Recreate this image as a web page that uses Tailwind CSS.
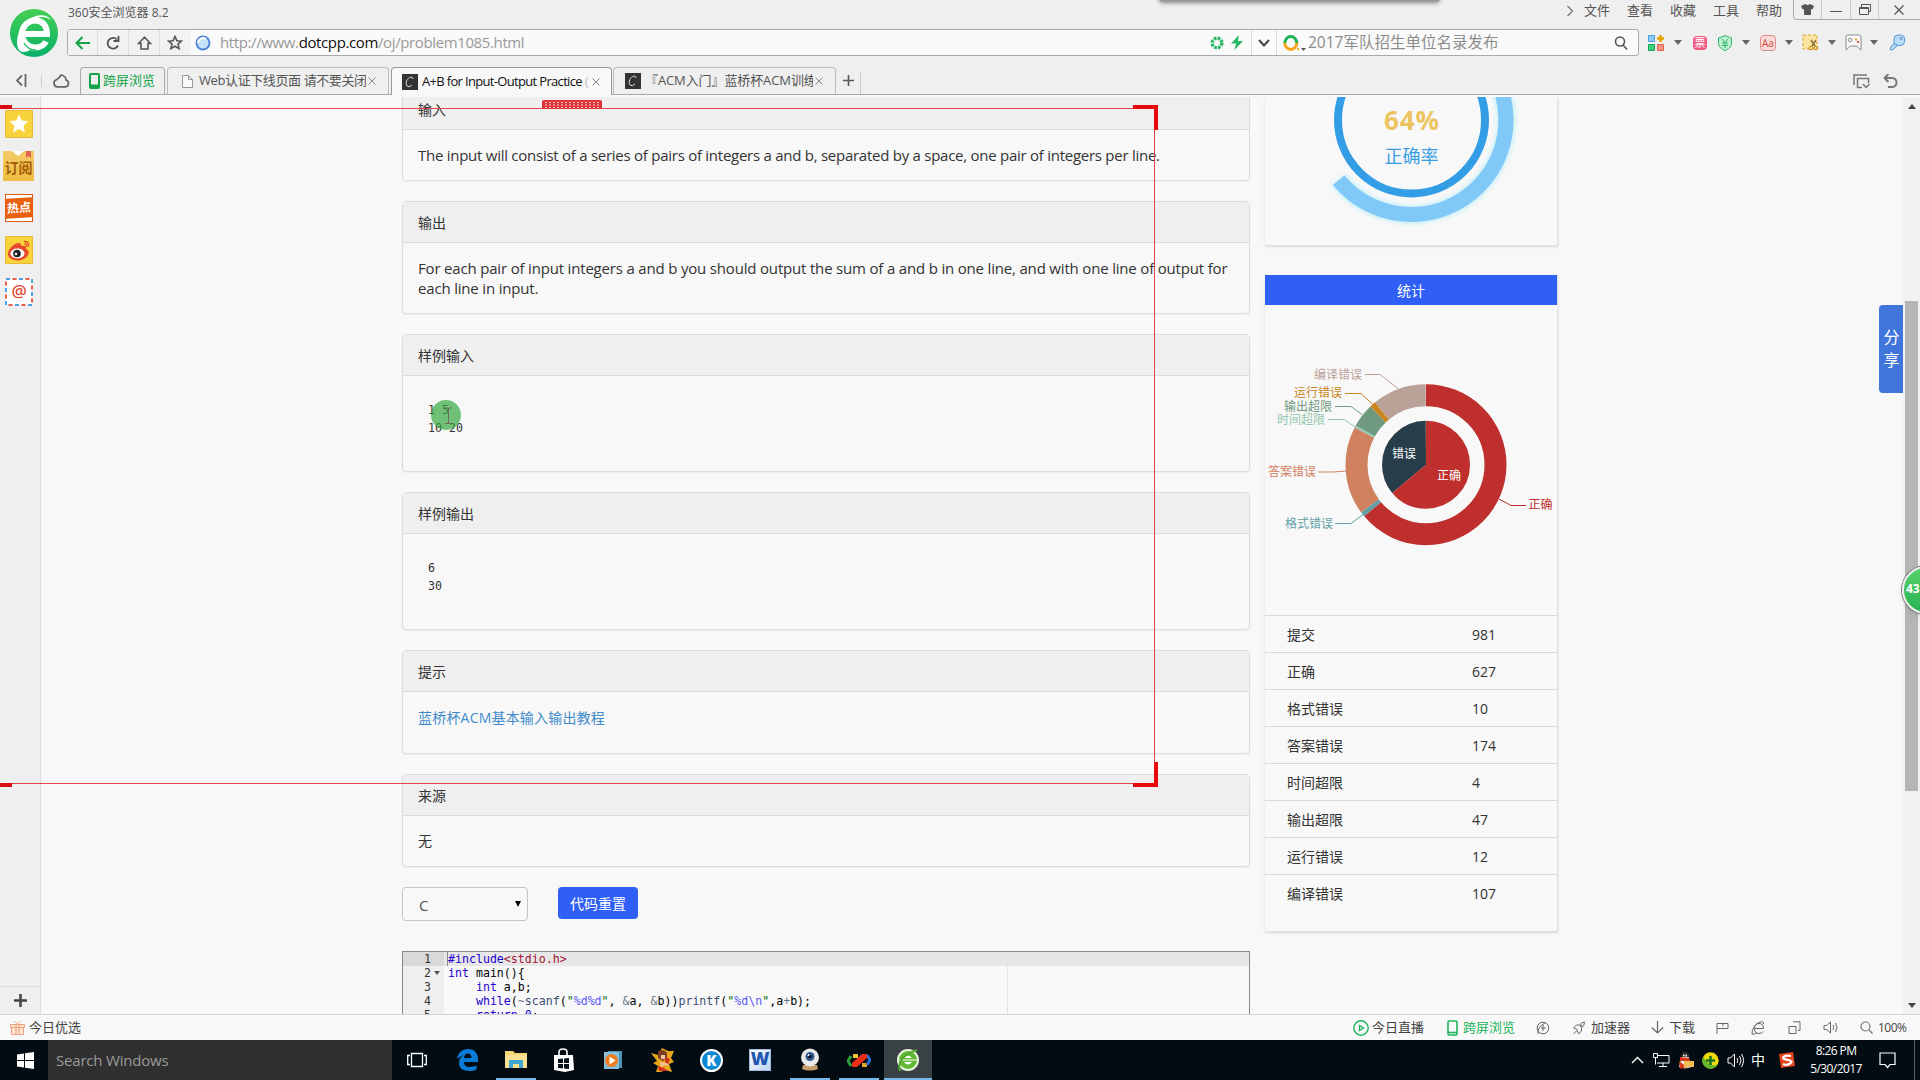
<!DOCTYPE html>
<html lang="zh-CN">
<head>
  <meta charset="UTF-8">
  <meta name="viewport" content="width=device-width, initial-scale=1.0">
  <title>A+B for Input-Output Practice</title>
  <script src="https://cdn.jsdelivr.net/npm/@tailwindcss/browser@4"></script>
  <style>
    body {
      font-family: 'Open Sans', 'Noto Sans CJK SC', sans-serif;
    }
    .mono {
      font-family: 'DejaVu Sans Mono', monospace;
    }
    svg {
      flex-shrink: 0;
    }
  </style>
</head>
<body class="relative w-[1920px] h-[1080px] overflow-hidden bg-[#f8f8f8] text-[#333]">

  <!-- 浏览器顶部 -->
  <header class="h-[97px] bg-[#efefef] flex flex-col">
    <div class="flex h-[66px]">
      <div class="w-[67px] pl-2.5 pt-[9px]">
        <svg width="48" height="48" viewBox="0 0 48 48">
          <defs><linearGradient id="lg" x1="0" y1="0" x2="0" y2="1"><stop offset="0" stop-color="#45cf52"/><stop offset="1" stop-color="#08b069"/></linearGradient></defs>
          <circle cx="24" cy="24" r="24" fill="url(#lg)"/>
          <path d="M14 25h23c0-9-5-13.500-12-13.500s-13 6-13 13.500 6 13.500 13 13.500c5 0 9-2 11-6" fill="none" stroke="#fff" stroke-width="6"/>
          <path d="M41 11C35 1 13 7 8 26c-2 8-1 17 5 17 4 0 8-2 11-5-5 2-9 1-11-3-4-9 3-22 14-26 5-2 9-1 14 2z" fill="#fff"/>
          <path d="M14 34q4 7 12 7" fill="none" stroke="#1fbd60" stroke-width="1.500"/>
        </svg>
      </div>
      <div class="flex-1">
        <div class="flex h-[29px] items-start justify-between">
          <div class="pt-[3px] pl-px text-[12px] leading-5 text-[#555]">360安全浏览器 8.2</div>
          <div class="flex">
            <div class="flex h-[22px] items-center text-[13px] text-[#555]">
              <svg class="mr-2.5" width="8" height="12" viewBox="0 0 8 12" fill="none" stroke="#777" stroke-width="1.3"><path d="M1.500 1l5 5-5 5"/></svg>
              <span class="w-[43px]">文件</span><span class="w-[43px]">查看</span><span class="w-[43px]">收藏</span><span class="w-[43px]">工具</span><span class="w-[37px]">帮助</span>
            </div>
            <div class="flex h-5 w-[127px] rounded-bl border-b border-l border-[#aaa]">
              <div class="flex w-7 items-center justify-center border-r border-[#ccc]"><svg width="13" height="11" viewBox="0 0 13 11" fill="#555"><path d="M4 0q2.500 2 5 0l4 2-1.500 3.500L10 5v6H3V5l-1.500.5L0 2z"/></svg></div>
              <div class="flex w-[29px] items-center justify-center border-r border-[#ccc]"><span class="mt-1 h-px w-3 bg-[#555]"></span></div>
              <div class="flex w-7 items-center justify-center border-r border-[#ccc]"><svg width="12" height="11" viewBox="0 0 12 11" fill="none" stroke="#555"><path d="M.5 3.500h9v7h-9zM.5 4.500h9M2.500 3V.5h9v7h-2"/></svg></div>
              <div class="flex flex-1 items-center justify-center pr-px"><svg width="10" height="10" viewBox="0 0 10 10" stroke="#555" stroke-width="1.200"><path d="M.5.5l9 9M9.500.5l-9 9"/></svg></div>
            </div>
          </div>
        </div>
        <div class="flex items-center">
          <!-- 地址栏 -->
          <div class="flex h-[27px] w-[1572px] rounded-[3px] border border-[#aaa] bg-[#fafafa]">
            <div class="flex w-[30px] items-center justify-center border-r border-[#ddd] bg-[#f2f2f2]"><svg width="15" height="14" viewBox="0 0 15 14" fill="none" stroke="#12a348" stroke-width="2"><path d="M7.500 1L1.500 7l6 6M2 7h13"/></svg></div>
            <div class="flex w-[31px] items-center justify-center border-r border-[#ddd] bg-[#f2f2f2]"><svg width="14" height="14" viewBox="0 0 14 14" fill="none" stroke="#555" stroke-width="1.800"><path d="M12 9.500A5.400 5.400 0 1 1 11 3.500"/><path d="M12.500 0v5H7.500"/></svg></div>
            <div class="flex w-[31px] items-center justify-center border-r border-[#ddd] bg-[#f2f2f2]"><svg width="15" height="14" viewBox="0 0 15 14" fill="none" stroke="#555" stroke-width="1.600"><path d="M7.500 1.200L1.500 7.500H4V13h7V7.500h2.500z"/></svg></div>
            <div class="flex w-[31px] items-center justify-center bg-[#f2f2f2] pr-px"><svg width="16" height="15" viewBox="0 0 16 15" fill="none" stroke="#555" stroke-width="1.600"><path d="M8 1.500l1.900 4.200 4.600.4-3.500 3 1.100 4.500L8 11.200l-4.100 2.400L5 9.100l-3.500-3 4.600-.4z"/></svg></div>
            <div class="flex w-[29px] items-center pl-1"><svg width="16" height="16" viewBox="0 0 16 16"><circle cx="8" cy="8" r="6.500" fill="#c5e2fa" stroke="#4b86d6" stroke-width="2"/><path d="M3 8a5 5 0 0 1 8-4" stroke="#fff" stroke-width="2" fill="none"/></svg></div>
            <div class="flex-1 text-[15px] leading-[25px] tracking-[-0.38px] text-[#999]">http://www.<span class="text-[#111]">dotcpp.com</span>/oj/problem1085.html</div>
            <div class="flex items-center gap-[7px] pr-2">
              <svg width="14" height="14" viewBox="0 0 14 14" fill="none"><circle cx="7" cy="7" r="4.800" stroke="#2bb866" stroke-width="3.500" stroke-dasharray="2.700 1.070"/></svg>
              <svg width="12" height="15" viewBox="0 0 12 15" fill="#2bb866"><path d="M8 0L0 8.500h5L3.500 15 12 6H7z"/></svg>
            </div>
            <div class="flex w-[26px] items-center justify-center border-x border-[#ddd]"><svg width="12" height="8" viewBox="0 0 12 8" fill="none" stroke="#444" stroke-width="2"><path d="M1 1l5 5.500L11 1"/></svg></div>
            <div class="flex w-[361px] items-center pl-1.5">
              <svg width="24" height="18" viewBox="0 0 24 18" fill="none"><path d="M1.800 9a6 6.500 0 0 1 12 0" stroke="#1fb356" stroke-width="3"/><path d="M1.800 9a6 6.500 0 0 0 12 0" stroke="#f6a316" stroke-width="3"/><path d="M14 14h2v2h-2z" fill="#f6a316"/><path d="M18 14h5l-2.500 3z" fill="#555"/></svg>
              <span class="ml-px flex-1 text-[15.500px] leading-[25px] text-[#8c8c8c]">2017军队招生单位名录发布</span>
              <svg class="mr-2.5" width="14" height="14" viewBox="0 0 14 14" fill="none" stroke="#555" stroke-width="1.600"><circle cx="6" cy="5.500" r="4.500"/><path d="M9 9l4 4.500"/></svg>
            </div>
          </div>
          <!-- 扩展图标 -->
          <div class="flex flex-1 items-center pl-[9px]">
            <svg width="16" height="16" viewBox="0 0 16 16"><path d="M.5.5h6v6h-6z" fill="#8cc9f4" stroke="#4a9de0"/><path d="M.5 9.500h6v6h-6z" fill="#3fd17d" stroke="#10a550"/><path d="M9.500 9.500h6v6h-6z" fill="#f79384" stroke="#e5604d"/><path d="M12.500 0v7M9 3.500h7" stroke="#e8a400" stroke-width="2.500"/></svg>
            <svg class="ml-2.5 mr-[11px]" width="8" height="5" viewBox="0 0 8 5" fill="#666"><path d="M0 0h8L4 5z"/></svg>
            <span class="h-3.5 w-3.5 rounded-sm bg-[#ef5a83] text-center text-[11px] leading-[14px] text-white">票</span>
            <svg class="ml-2.5" width="16" height="16" viewBox="0 0 16 16" fill="#c0f0d2" stroke="#2fb56b"><path d="M8 .7l6.500 2.300v5c0 4-3.500 6.500-6.500 7.500C5 14.500 1.500 12 1.500 8V3z"/><path d="M5 4l3 3.500L11 4M8 7.500V13M5 8h6M5 10.500h6" fill="none"/></svg>
            <svg class="ml-[9px] mr-2.5" width="8" height="5" viewBox="0 0 8 5" fill="#666"><path d="M0 0h8L4 5z"/></svg>
            <span class="h-4 w-4 rounded-sm border border-[#dc8b86] bg-[#fbdcd9] text-center text-[10px] leading-[14px] text-[#d14b43]">Aa</span>
            <svg class="ml-[9px] mr-[9px]" width="8" height="5" viewBox="0 0 8 5" fill="#666"><path d="M0 0h8L4 5z"/></svg>
            <svg width="17" height="17" viewBox="0 0 17 17" fill="none"><path d="M1 1h14v14H1z" fill="#fbe3a0" stroke="#e0a528" stroke-dasharray="3 2"/><path d="M9 6l4 6M14 6l-4 6" stroke="#8a6a3a" stroke-width="1.500"/><circle cx="9" cy="14" r="1.800" stroke="#c88612"/><circle cx="14" cy="14" r="1.800" stroke="#c88612"/></svg>
            <svg class="ml-[9px] mr-[9px]" width="8" height="5" viewBox="0 0 8 5" fill="#666"><path d="M0 0h8L4 5z"/></svg>
            <svg width="17" height="17" viewBox="0 0 17 17" fill="#fafafa" stroke="#8b8b8b"><path d="M2.500 1h12q1.500 0 1.500 2v13l-4.500-4h-6L1 16V3q0-2 1.500-2z"/><circle cx="5" cy="6" r="1.800"/><path d="M10 4.500h2v2h-2z" fill="#e9a21d" stroke="none"/><path d="M12 7h2v2h-2z" fill="#dd5141" stroke="none"/></svg>
            <svg class="ml-[8px] mr-[11px]" width="8" height="5" viewBox="0 0 8 5" fill="#666"><path d="M0 0h8L4 5z"/></svg>
            <svg width="17" height="17" viewBox="0 0 17 17" fill="#b6dcf7" stroke="#5b93c9"><path d="M5 9l-4 5.500q0 2 2 1.500L8 12z"/><rect x="5" y="1" width="10.500" height="10.500" rx="4"/><circle cx="12" cy="4.500" r="1"/></svg>
          </div>
        </div>
      </div>
    </div>
    <!-- 标签栏 -->
    <div class="flex h-[29px] items-end border-b border-[#aaa] pl-[15px]">
      <div class="flex h-[27px] w-[65px] items-center">
        <svg width="12" height="13" viewBox="0 0 12 13" fill="none" stroke="#666" stroke-width="1.800"><path d="M7 1.500l-5 5 5 5M10.500 0v13"/></svg>
        <span class="ml-3.5 h-3 w-px bg-[#ccc]"></span>
        <svg class="ml-[11px]" width="17" height="14" viewBox="0 0 17 14" fill="none" stroke="#666" stroke-width="1.700"><path d="M5 12.800a3.600 3.600 0 0 1-1.500-7Q6.500 4 8 1q5 1 5 5a3.500 3.500 0 0 1-.5 6.800z"/></svg>
      </div>
      <div class="flex h-[27px] w-[85px] items-center rounded-t border border-b-0 border-[#aaa] pl-2 text-[13px] text-[#12a348]"><svg class="mr-[3px]" width="11" height="16" viewBox="0 0 11 16" fill="none"><rect x="1" y="1" width="9" height="14" rx="1" stroke="#12a348" stroke-width="2"/><path d="M1 13h9" stroke="#12a348" stroke-width="3"/></svg>跨屏浏览</div>
      <div class="ml-0.5 flex h-[27px] w-[222px] items-center overflow-hidden rounded-t border border-b-0 border-[#bbb] pl-3.5 text-[13px] text-[#555]">
        <svg width="11" height="13" viewBox="0 0 11 13" fill="#fafafa" stroke="#999"><path d="M.5.5h6l4 4v8H.5zM6.500.5v4h4"/></svg>
        <span class="ml-1.5 mr-0.5 w-[167px] overflow-hidden whitespace-nowrap tracking-[-0.4px]">Web认证下线页面 请不要关闭</span>
        <svg width="8" height="8" viewBox="0 0 8 8" stroke="#888"><path d="M.5.5l7 7M7.500.5l-7 7"/></svg>
      </div>
      <div class="-mb-px ml-0.5 flex h-7 w-[221px] items-center overflow-hidden rounded-t border border-b-0 border-[#999] bg-[#f8f8f8] pl-2.5 text-[13px] text-[#111]">
        <svg width="16" height="16" viewBox="0 0 16 16"><path d="M0 0h16v16H0z" fill="#333"/><path d="M11 5q0-2-2-2C5 4 3 9 5 12q2 2 5-1" fill="none" stroke="#ddd"/></svg>
        <span class="ml-1 w-[170px] overflow-hidden whitespace-nowrap tracking-[-0.67px]">A+B for Input-Output Practice <span class="text-[#bbb]">(</span></span>
        <svg width="8" height="8" viewBox="0 0 8 8" stroke="#888"><path d="M.5.5l7 7M7.500.5l-7 7"/></svg>
      </div>
      <div class="ml-px flex h-[27px] w-[223px] items-center overflow-hidden rounded-t border border-b-0 border-[#bbb] pl-[11px] text-[13px] text-[#555]">
        <svg width="16" height="16" viewBox="0 0 16 16"><path d="M0 0h16v16H0z" fill="#333"/><path d="M11 5q0-2-2-2C5 4 3 9 5 12q2 2 5-1" fill="none" stroke="#ddd"/></svg>
        <span class="ml-1 mr-0.5 w-[168px] overflow-hidden whitespace-nowrap tracking-[-0.1px]">『ACM入门』蓝桥杯ACM训练</span>
        <svg width="8" height="8" viewBox="0 0 8 8" stroke="#888"><path d="M.5.5l7 7M7.500.5l-7 7"/></svg>
      </div>
      <div class="flex h-[23px] w-[25px] items-center justify-center border-r border-[#ccc] pb-1"><svg width="11" height="11" viewBox="0 0 11 11" stroke="#555" stroke-width="1.600"><path d="M5.500 0v11M0 5.500h11"/></svg></div>
      <div class="flex flex-1 items-center justify-end gap-[13px] pb-[5px] pr-[22px]">
        <svg width="17" height="15" viewBox="0 0 17 15" fill="none" stroke="#777" stroke-width="1.500"><path d="M1 11V1h13M9 13.500H4.500V4.500h11V9M10 10l3 3.500 3.500-3.500"/></svg>
        <svg width="15" height="15" viewBox="0 0 15 15" fill="none" stroke="#777" stroke-width="2"><path d="M2 4h7a4.500 4.500 0 0 1 0 9H5"/><path d="M5.500 0L1.500 4l4 4"/></svg>
      </div>
    </div>
    <div class="h-0.5 bg-[#f8f8f8]"></div>
  </header>

  <main class="flex h-[917px] overflow-hidden">
    <!-- 侧边栏 -->
    <aside class="flex w-[41px] flex-col items-start border-r border-[#ddd] bg-[#efefef] pl-[5px] pt-[13px]">
      <svg width="28" height="28" viewBox="0 0 28 28"><path d="M.5.5h27v27H.5z" fill="#f9d33c" stroke="#e6b93a"/><path d="M14 4.500l2.800 6 6.700.7-5 4.500 1.500 6.800-6-3.600-6 3.600 1.500-6.800-5-4.500 6.700-.7z" fill="#fff"/></svg>
      <div class="relative -ml-0.5 mt-[13px] h-[30px] w-[31px] bg-[#f0c14c] bg-linear-to-b from-[#f3cb67] to-[#eebc42] pt-[8px] text-center text-[14px] font-bold leading-[18px] text-[#a65c05]">
        <svg class="absolute inset-0" width="31" height="10" viewBox="0 0 31 10"><path d="M9 0h12l-6 5z" fill="#fff"/><path d="M23 0h5v7l-2.500-2L23 7z" fill="#e2604f"/></svg>
        <span class="relative">订阅</span>
      </div>
      <div class="mt-[13px] h-7 w-7 border border-[#e2590f] bg-white py-[3px]"><div class="h-5 -skew-y-3 bg-[#e9600f] text-center text-[12px] font-bold leading-5 text-white">热点</div></div>
      <svg class="mt-3.5" width="28" height="28" viewBox="0 0 28 28"><path d="M.5.5h27v27H.5z" fill="#f9d33c" stroke="#e6b93a"/><path d="M3 18c0-5 6-11 11-11 2 0 2 2 2 3 3-1 6 0 5 3 3 1 3 4 2 6-2 4-7 5.500-11 5.500-5 0-9-3-9-6.500z" fill="#e8492c"/><ellipse cx="12.500" cy="17.500" rx="7" ry="5" fill="#fff"/><circle cx="12" cy="17.500" r="3.800" fill="#222"/><circle cx="11" cy="18" r="1.200" fill="#fff"/><path d="M19 5.500q5-.5 4.500 5M19.500 8q2.500 0 2 2.500" fill="none" stroke="#e8492c" stroke-width="1.500"/></svg>
      <div class="relative mt-3.5 h-7 w-7 text-center text-[17px] font-semibold leading-[25px] text-[#df4c37]">
        <svg class="absolute inset-0" width="28" height="28" viewBox="0 0 28 28" fill="none" stroke-width="2"><path d="M1 1h26v26H1z" fill="#fff"/><rect x="1" y="1" width="26" height="26" stroke="#4d9fe0" stroke-dasharray="4 9"/><rect x="1" y="1" width="26" height="26" stroke="#e8604c" stroke-dasharray="4 9" stroke-dashoffset="-6.500"/></svg>
        <span class="relative">@</span>
      </div>
      <div class="-ml-[5px] mt-auto flex h-7 w-10 items-center justify-center border-t border-[#ddd]"><svg width="13" height="13" viewBox="0 0 13 13" stroke="#444" stroke-width="2.500"><path d="M6.500 0v13M0 6.500h13"/></svg></div>
    </aside>

    <!-- 题目内容 -->
    <section class="ml-[361px] w-[848px] text-[14px] leading-5">
      <div class="-mt-[9px] mb-5 h-[93px] rounded border border-[#dcdcdc] shadow-xs">
        <div class="h-[41px] border-b border-[#dcdcdc] bg-[#efefef] px-[15px] py-[11px]">输入</div>
        <p class="px-[15px] pt-[15px] text-[15px] tracking-[-0.26px]">The input will consist of a series of pairs of integers a and b, separated by a space, one pair of integers per line.</p>
      </div>
      <div class="mb-5 h-[113px] rounded border border-[#dcdcdc] shadow-xs">
        <div class="h-[41px] border-b border-[#dcdcdc] bg-[#efefef] px-[15px] py-[11px]">输出</div>
        <p class="whitespace-nowrap px-[15px] pt-[15px] text-[15px] tracking-[-0.18px]">For each pair of input integers a and b you should output the sum of a and b in one line, and with one line of output for<br>each line in input.</p>
      </div>
      <div class="mb-5 h-[138px] rounded border border-[#dcdcdc] shadow-xs">
        <div class="h-[41px] border-b border-[#dcdcdc] bg-[#efefef] px-[15px] py-[11px]">样例输入</div>
        <pre class="mono px-[25px] pt-[25px] text-[11.600px] leading-[18px]">1 5
10 20</pre>
      </div>
      <div class="mb-5 h-[138px] rounded border border-[#dcdcdc] shadow-xs">
        <div class="h-[41px] border-b border-[#dcdcdc] bg-[#efefef] px-[15px] py-[11px]">样例输出</div>
        <pre class="mono px-[25px] pt-[25px] text-[11.600px] leading-[18px]">6
30</pre>
      </div>
      <div class="mb-5 h-[104px] rounded border border-[#dcdcdc] shadow-xs">
        <div class="h-[41px] border-b border-[#dcdcdc] bg-[#efefef] px-[15px] py-[11px]">提示</div>
        <p class="px-[15px] pt-4 tracking-[0.2px]"><a class="text-[#428bca]">蓝桥杯ACM基本输入输出教程</a></p>
      </div>
      <div class="h-[93px] rounded border border-[#dcdcdc] shadow-xs">
        <div class="h-[41px] border-b border-[#dcdcdc] bg-[#efefef] px-[15px] py-[11px]">来源</div>
        <p class="px-[15px] pt-[15px]">无</p>
      </div>
      <div class="mt-5 flex items-start">
        <div class="flex h-[34px] w-[126px] items-center justify-between rounded border border-[#c4c4c4] pl-4 pr-1.5 text-[15px] text-[#555]"><span class="pt-0.5">C</span><svg width="6" height="6" viewBox="0 0 6 6"><path d="M0 0h6L3 6z"/></svg></div>
        <button class="ml-[30px] h-8 w-20 rounded bg-[#2f5ff5] pt-px text-[14px] text-white">代码重置</button>
      </div>
      <!-- 代码编辑器 -->
      <div class="mono mt-[30px] flex h-[72px] border border-b-0 border-[#888] text-[11.600px] leading-[14px] text-black">
        <div class="w-[41px] bg-[#efefef] text-[#333]">
          <div class="h-3.5 bg-[#d9d9d9] pr-[13px] text-right">1</div>
          <div class="flex h-3.5 items-center justify-end pr-1">2<svg class="ml-[3px]" width="6" height="4" viewBox="0 0 6 4" fill="#555"><path d="M0 0h6L3 4z"/></svg></div>
          <div class="pr-[13px] text-right">3</div>
          <div class="pr-[13px] text-right">4</div>
          <div class="pr-[13px] text-right">5</div>
        </div>
        <div class="w-[564px] border-r border-[#e4e4e4]">
          <div class="h-3.5 whitespace-pre bg-[#e7e7e7] pl-[3px]"><span class="border-l border-[#888]"></span><span class="text-[#1c00cf]">#include</span><span class="text-[#a31535]">&lt;stdio.h&gt;</span></div>
          <div class="h-3.5 whitespace-pre pl-1"><span class="text-[#1c00cf]">int</span> main(){</div>
          <div class="h-3.5 whitespace-pre pl-1">    <span class="text-[#1c00cf]">int</span> a,b;</div>
          <div class="h-3.5 whitespace-pre pl-1">    <span class="text-[#1c00cf]">while</span>(<span class="text-[#687687]">~</span><span class="text-[#3c4c72]">scanf</span>(<span class="text-[#036a07]">"</span><span class="text-[#585cf6]">%d%d</span><span class="text-[#036a07]">"</span>, <span class="text-[#687687]">&amp;</span>a, <span class="text-[#687687]">&amp;</span>b))<span class="text-[#3c4c72]">printf</span>(<span class="text-[#036a07]">"</span><span class="text-[#585cf6]">%d\n</span><span class="text-[#036a07]">"</span>,a<span class="text-[#687687]">+</span>b);</div>
          <div class="h-3.5 whitespace-pre pl-1">    <span class="text-[#1c00cf]">return</span> <span class="text-[#0000cd]">0</span>;</div>
        </div>
        <div class="h-3.5 flex-1 bg-[#e7e7e7]"></div>
      </div>
    </section>

    <!-- 右侧统计 -->
    <section class="ml-[15px] w-[293px]">
      <div class="h-[149px] border-b border-r border-[#e0e0e0] shadow-sm">
        <svg width="292" height="148" viewBox="0 0 292 148">
          <defs><filter id="glow" x="-20%" y="-20%" width="140%" height="140%"><feGaussianBlur stdDeviation="2.500"/></filter></defs>
          <g fill="none" transform="translate(146.500 23)">
            <circle r="94.500" stroke="#b9edf7" stroke-width="17" stroke-dasharray="64 36" pathLength="100" transform="rotate(-90)" filter="url(#glow)"/>
            <circle r="94.500" stroke="#7fc8f8" stroke-width="15" stroke-dasharray="64 36" pathLength="100" transform="rotate(-90)"/>
            <circle r="73.500" stroke="#339de6" stroke-width="8"/>
          </g>
          <text x="146.500" y="32.500" text-anchor="middle" font-size="26" font-weight="700" fill="#ecc45f" textLength="55">64%</text>
          <text x="146.500" y="66" text-anchor="middle" font-size="18" fill="#3a9de4">正确率</text>
        </svg>
      </div>
      <div class="mt-[29px] h-[657px] border-b border-r border-[#e0e0e0] shadow-sm">
        <div class="h-[30px] bg-[#2f5ff5] text-center text-[14px] leading-[31px] text-white">统计</div>
        <svg class="block" width="292" height="310" viewBox="1265 305 292 310" font-size="12">
          <g fill="none" stroke-width="22" transform="translate(1426 464.700) rotate(-90)">
            <circle r="69.500" pathLength="981" stroke="#61a0a8" stroke-dasharray="10 971" stroke-dashoffset="-627"/>
            <circle r="69.500" pathLength="981" stroke="#cf8160" stroke-dasharray="174 807" stroke-dashoffset="-637"/>
            <circle r="69.500" pathLength="981" stroke="#91c7ae" stroke-dasharray="4 977" stroke-dashoffset="-811"/>
            <circle r="69.500" pathLength="981" stroke="#6f9a7f" stroke-dasharray="47 934" stroke-dashoffset="-815"/>
            <circle r="69.500" pathLength="981" stroke="#ca8622" stroke-dasharray="12 969" stroke-dashoffset="-862"/>
            <circle r="69.500" pathLength="981" stroke="#bba298" stroke-dasharray="106.500 2000" stroke-dashoffset="-874"/>
            <circle r="69.500" pathLength="981" stroke="#bf2f2e" stroke-dasharray="627 2000"/>
            <circle r="22" pathLength="981" stroke-width="44" stroke="#273d4a" stroke-dasharray="353 2000" stroke-dashoffset="-627"/>
            <circle r="22" pathLength="981" stroke-width="44" stroke="#bf2f2e" stroke-dasharray="627 2000"/>
          </g>
          <g fill="none">
            <path d="M1365 374.500h15l18 14" stroke="#bba298"/>
            <path d="M1345 393.500h16l12 11" stroke="#ca8622"/>
            <path d="M1335 406.500h16l11 8" stroke="#6f9a7f"/>
            <path d="M1328 419.500h16l12 8" stroke="#91c7ae"/>
            <path d="M1318 472h15l13-1" stroke="#cf8160"/>
            <path d="M1335 523.500h16l12-9" stroke="#61a0a8"/>
            <path d="M1499 499l12 6.500h15" stroke="#bf2f2e"/>
          </g>
          <text x="1314" y="379" fill="#bba298">编译错误</text>
          <text x="1294" y="397" fill="#ca8622">运行错误</text>
          <text x="1284" y="411" fill="#6f9a7f">输出超限</text>
          <text x="1277" y="424" fill="#91c7ae">时间超限</text>
          <text x="1268" y="476" fill="#cf8160">答案错误</text>
          <text x="1285" y="528" fill="#61a0a8">格式错误</text>
          <text x="1528.500" y="509" fill="#bf2f2e">正确</text>
          <text x="1392" y="458" fill="#fff">错误</text>
          <text x="1437" y="480" fill="#fff">正确</text>
        </svg>
        <div class="text-[14px] leading-[37px]">
          <div class="flex h-[37px] border-t border-[#d9d9d9] pl-[22px]"><span class="w-[185px]">提交</span><span>981</span></div>
          <div class="flex h-[37px] border-t border-[#d9d9d9] pl-[22px]"><span class="w-[185px]">正确</span><span>627</span></div>
          <div class="flex h-[37px] border-t border-[#d9d9d9] pl-[22px]"><span class="w-[185px]">格式错误</span><span>10</span></div>
          <div class="flex h-[37px] border-t border-[#d9d9d9] pl-[22px]"><span class="w-[185px]">答案错误</span><span>174</span></div>
          <div class="flex h-[37px] border-t border-[#d9d9d9] pl-[22px]"><span class="w-[185px]">时间超限</span><span>4</span></div>
          <div class="flex h-[37px] border-t border-[#d9d9d9] pl-[22px]"><span class="w-[185px]">输出超限</span><span>47</span></div>
          <div class="flex h-[37px] border-t border-[#d9d9d9] pl-[22px]"><span class="w-[185px]">运行错误</span><span>12</span></div>
          <div class="flex h-[37px] border-t border-[#d9d9d9] pl-[22px]"><span class="w-[185px]">编译错误</span><span>107</span></div>
        </div>
      </div>
    </section>

    <!-- 滚动条 -->
    <div class="ml-auto flex w-[17px] flex-col items-center bg-[#f1f1f1] pb-1.5 pt-[7px]">
      <svg width="8" height="5" viewBox="0 0 8 5" fill="#444"><path d="M0 5h8L4 0z"/></svg>
      <div class="mt-[192px] h-[490px] w-[13px] bg-[#b5b5b5]"></div>
      <svg class="mt-auto" width="8" height="5" viewBox="0 0 8 5" fill="#444"><path d="M0 0h8L4 5z"/></svg>
    </div>
  </main>

  <!-- 状态栏 -->
  <div class="flex h-[26px] items-center border-t border-[#d5d5d5] bg-[#f8f8f8] text-[13px] leading-[25px] text-[#444]">
    <svg class="ml-2.5 mr-1" width="15" height="14" viewBox="0 0 15 14" fill="#fde3d2" stroke="#f0a27c"><path d="M.5 3.500h14v3H.5zM1.500 6.500h12v7h-12zM6 3.500h3v10H6zM7.500 3L4.500.5M7.500 3l3-2.500"/></svg>
    <span>今日优选</span>
    <svg class="ml-auto mr-[3px]" width="16" height="16" viewBox="0 0 16 16" fill="none" stroke="#21b45c" stroke-width="1.400"><circle cx="8" cy="8" r="7.200"/><path d="M6.500 5.500v5L10.500 8z"/></svg>
    <span class="w-[75px]">今日直播</span>
    <svg class="mr-[5px]" width="11" height="16" viewBox="0 0 11 16" fill="none" stroke="#21b45c" stroke-width="1.600"><rect x="1" y="1" width="9" height="14" rx="1"/><path d="M1 12.500h9"/></svg>
    <span class="w-[73px] text-[#21b45c]">跨屏浏览</span>
    <svg class="mr-[22px]" width="14" height="14" viewBox="0 0 14 14" fill="none" stroke="#666"><circle cx="7" cy="7" r="5.800"/><path d="M2 13Q1 6 9 2M7 4v6M10 7H5"/></svg>
    <svg class="mr-[5px]" width="14" height="14" viewBox="0 0 13 14" fill="none" stroke="#666"><path d="M4 8l-3-1 3-3h3q2-3 5-3 0 4-3 6v3l-3 3-1-3zM1 13l3-3"/><circle cx="8.500" cy="4.800" r="1"/></svg>
    <span class="w-[60px]">加速器</span>
    <svg class="mr-[5px]" width="13" height="13" viewBox="0 0 13 13" fill="none" stroke="#666" stroke-width="1.200"><path d="M6.500 0v12M.8 6.500l5.700 5.500 5.700-5.500"/></svg>
    <span class="w-[47px]">下载</span>
    <svg width="13" height="12" viewBox="0 0 13 12" fill="none" stroke="#666"><path d="M1 12V1.500h11v5H1M7 1.500v3"/></svg>
    <svg class="ml-[22px]" width="15" height="14" viewBox="0 0 15 14" fill="none" stroke="#666"><path d="M3.500 7.500h9Q12.500 2.500 8 2.500T3.500 7.500 8 12.500q3 0 4-2M12.500 3Q13-1 7 2 1 6 1 13q2 1 5-1.500"/></svg>
    <svg class="ml-[22px]" width="13" height="13" viewBox="0 0 13 13" fill="none" stroke="#666"><path d="M1 5.500h7v7H1zM5 .8h7v8.700h-2"/></svg>
    <svg class="ml-[22px]" width="16" height="13" viewBox="0 0 16 13" fill="none" stroke="#666"><path d="M1 4.500h2.500l4-3.500v11l-4-3.500H1zM10 4q1.500 2.500 0 5M12.500 2q3 4.500 0 9"/></svg>
    <svg class="ml-[21px] mr-[5px]" width="13" height="13" viewBox="0 0 13 13" fill="none" stroke="#777" stroke-width="1.200"><circle cx="5.500" cy="5.500" r="4.500"/><path d="M9 9l3.500 3.500"/></svg>
    <span class="mr-[14px] w-7 text-[12px] tracking-[-0.5px]">100%</span>
  </div>

  <!-- 任务栏 -->
  <footer class="flex h-10 bg-[#030c12] text-white">
    <div class="flex w-12 items-center justify-center"><svg class="-mr-0.5" width="17" height="17" viewBox="0 0 17 17" fill="#fff"><path d="M0 2.500l7-1V8H0zM8 1.300L17 0v8H8zM0 9h7v6.500l-7-1zM8 9h9v8l-9-1.300z"/></svg></div>
    <div class="w-[344px] bg-[#2f2f2f] pl-2 text-[15px] leading-[41px] tracking-[-0.2px] text-[#9b9b9b]">Search Windows</div>
    <div class="flex w-[49px] items-center justify-center"><svg width="20" height="16" viewBox="0 0 20 16" fill="none" stroke="#fff" stroke-width="1.300"><path d="M4.500 1.500h11v13h-11zM3 3.500H.7v9H3M17 3.500h2.300v9H17"/></svg></div>
    <div class="flex w-[49px] items-center justify-center pl-[3px]"><svg width="21" height="22" viewBox="0 0 21 22" fill="#0a7bd6"><path d="M0 10C1 4 5 0 11 0c7 0 10 5 10 10v3H7c0 4 3 5 6 5 2 0 5-.6 6.500-1.700v4.200C17.500 21.600 15 22 12 22 6 22 2 19 2 14c0-4 2-6.500 5-8-2 .7-5 2-7 4zM7 9h7.500c0-3-1.300-4.500-3.700-4.500S7.300 6.500 7 9z"/></svg></div>
    <div class="flex w-[49px] flex-col items-center pl-0.5"><svg class="mt-2.5" width="22" height="18" viewBox="0 0 22 18"><path d="M0 1h8l2 2h12v15H0z" fill="#f4d675"/><path d="M0 5h22v13H0z" fill="#fbe393"/><path d="M4 18v-8h14v8h-4v-4H8v4z" fill="#3fa7d0"/></svg><span class="mt-auto h-0.5 w-10 bg-[#76b9ed]"></span></div>
    <div class="flex w-[49px] items-center justify-center"><svg width="22" height="24" viewBox="0 0 22 24"><path d="M6 9V4q0-3 4-3t4 3v5" fill="none" stroke="#fff" stroke-width="1.600"/><path d="M1 7h19l1 15-9 2L1 22z" fill="#fff"/><path d="M5 11l5-.5V15H5zM11 10.400l5-.4v5h-5zM5 16h5v4.500L5 20zM11 16h5v5l-5-.5z" fill="#06121a"/></svg></div>
    <div class="flex w-[49px] items-center justify-center"><svg width="20" height="20" viewBox="0 0 20 20"><path d="M5 1h14v17H5z" fill="#4b92b5"/><path d="M1 2h15v17H1z" fill="#85c0dc"/><circle cx="8.500" cy="10.500" r="6.500" fill="#ee7b1d"/><path d="M6.500 6.500v8l6-4z" fill="#fff"/></svg></div>
    <div class="flex w-[49px] items-center justify-center pl-0.5"><svg width="24" height="24" viewBox="0 0 24 24"><path d="M0 5l7 2 4-7 6 3 6 0-3 7 3 4-5 2 3 8-7-2-4 2-5 0 2-6-5-3 4-2z" fill="#e9a71a"/><path d="M7 3q6-3 9 2v5l-4 3-5-3z" fill="#7c3a28"/><path d="M10 7h4v4h-4zM9 14l7 1 2 3-5-1-3 3z" fill="#f6c49a"/><path d="M7 18l6 2 4 3H8zM15 9l4 2-2 5-3-2z" fill="#d5301d"/></svg></div>
    <div class="flex w-[49px] items-center justify-center pl-0.5"><div class="h-[23px] w-[23px] rounded-full border-2 border-white bg-[#0b87d4] text-center text-[15px] font-extrabold leading-[19px]">K</div></div>
    <div class="flex w-[49px] items-center justify-center pl-px"><div class="flex h-[22px] w-[22px] items-center justify-center border border-[#9dbbe2] bg-[#e9f1fb] bg-linear-to-br from-white to-[#bcd5f2] pb-1 text-[18px] font-extrabold leading-none text-[#1f56b0]">W</div></div>
    <div class="flex w-[49px] flex-col items-center pl-0.5"><svg class="mt-2" width="20" height="24" viewBox="0 0 20 24"><path d="M3 17h14l1 4q-8 3-16 0z" fill="#c9a06c"/><circle cx="10" cy="9.500" r="9" fill="#e9e9ea"/><circle cx="10" cy="8.500" r="4.500" fill="#33598b"/><circle cx="10" cy="8.500" r="2" fill="#0d1c35"/><circle cx="8.500" cy="7" r="1" fill="#fff"/></svg><span class="mt-auto h-0.5 w-10 bg-[#76b9ed]"></span></div>
    <div class="flex w-[49px] flex-col items-center pl-0.5"><svg class="mt-[13px]" width="24" height="15" viewBox="0 0 24 15"><path d="M6 1h5v4H6z" fill="#f0c62c"/><path d="M15 10h5v4h-5z" fill="#e5a91d"/><path d="M4 3L1 8l3 5" fill="none" stroke="#2e9d3c" stroke-width="3"/><path d="M20 2l3 5-3 5" fill="none" stroke="#2b6cd4" stroke-width="3"/><path d="M5 10L15 1h5v4L10 14H5z" fill="#ec2e19"/></svg><span class="mt-auto h-0.5 w-10 bg-[#76b9ed]"></span></div>
    <div class="ml-0.5 flex w-12 flex-col items-center bg-[#3a4144]"><svg class="mt-[9px]" width="22" height="22" viewBox="0 0 22 22"><circle cx="11" cy="11" r="10" fill="#62b834" stroke="#e8f6df" stroke-width="2"/><path d="M7 9q4-5 8 0zM7 13h8q-4 5-8 0z" fill="#fff"/><path d="M2 11h18" stroke="#e8f6df" stroke-width="1.200"/><path d="M3 22Q-1 8 20 1" fill="none" stroke="#4fa828" stroke-width="2"/></svg><span class="mt-auto h-0.5 w-12 bg-[#76b9ed]"></span></div>

    <div class="ml-auto flex items-center">
      <svg width="13" height="8" viewBox="0 0 13 8" fill="none" stroke="#fff" stroke-width="1.400"><path d="M1 7l5.500-5.500L12 7"/></svg>
      <svg class="ml-[9px]" width="17" height="14" viewBox="0 0 17 14" fill="none" stroke="#fff"><path d="M5 2.500h11v7.500H4M10 10v3M6 13.500h8M.5.500h4v4h-4zM2.500 4.500v7"/></svg>
      <svg class="ml-2" width="16" height="17" viewBox="0 0 16 17"><path d="M3 7q0-7 4-7t4 7l3 8-7 1.500L1 15z" fill="#eee"/><path d="M3 5q0-5 4-5t4 5z" fill="#26211d"/><path d="M5 2.500h1.500v2H5zM7.500 2.500H9v2H7.500z" fill="#fff"/><path d="M2 5l9 1 1 3H2zM1 9l4 3 4 4-7 .5z" fill="#d9381f"/><path d="M6 9h10v6H9l-3 1z" fill="#f1bd54"/></svg>
      <svg class="ml-2" width="17" height="17" viewBox="0 0 17 17"><circle cx="8.500" cy="8.500" r="8.200" fill="#f1d90c"/><path d="M1 5q8 12 15 7A8 8 0 0 1 1 5z" fill="#62b52a"/><path d="M8.500 4v9M4 8.500h9" stroke="#167424" stroke-width="2.500"/></svg>
      <svg class="ml-2" width="17" height="15" viewBox="0 0 17 15" fill="none" stroke="#fff"><path d="M1 5h2.500l4-4v13l-4-4H1zM10 5q1.500 2.500 0 5M12.500 3q3 4.500 0 9M14.500 1q4 6.500 0 13"/></svg>
      <span class="ml-[7px] w-[15px] text-[14px] leading-5">中</span>
      <svg class="ml-[13px]" width="16" height="16" viewBox="0 0 16 16"><path d="M0 2l14-2 2 14-14 2z" fill="#e7451b"/><path d="M12 4q-6-1-7.500 1T9 8t2 3.500T4 12" fill="none" stroke="#fff" stroke-width="2.200"/></svg>
      <div class="ml-3.5 w-[54px] whitespace-nowrap pb-px text-center text-[12px] leading-[18px] tracking-[-0.6px]">8:26 PM<br>5/30/2017</div>
      <svg class="ml-4 mr-[18px]" width="17" height="17" viewBox="0 0 17 17" fill="none" stroke="#fff" stroke-width="1.200"><path d="M1 1h15v11.500h-5L8.500 15.500 6 12.500H1z"/></svg>
      <span class="mr-[5px] h-10 w-px bg-[#5a6266]"></span>
    </div>
  </footer>

  <!-- 录屏区域边框 -->
  <div class="pointer-events-none absolute left-0 top-[108px] h-[676px] w-[1155px] border-y border-r border-[#e0474c]"></div>
  <div class="absolute left-0 top-[105px] h-1 w-3 bg-[#dc0d12]"></div>
  <div class="absolute left-0 top-[783px] h-1 w-3 bg-[#dc0d12]"></div>
  <div class="absolute left-[1133px] top-[105px] h-[25px] w-[25px] border-r-4 border-t-4 border-[#e8090d]"></div>
  <div class="absolute left-[1133px] top-[762px] h-[25px] w-[25px] border-b-4 border-r-4 border-[#e8090d]"></div>
  <svg class="absolute left-[542px] top-[100px]" width="60" height="9" viewBox="0 0 60 9">
    <path d="M0 9V2q0-2 2-2h56q2 0 2 2v7z" fill="#e03238"/>
    <path d="M3 2.500h55M3 5h55M3 7.500h55" stroke="#fbe0e0" stroke-width="1.200" stroke-dasharray="1.800 2.200"/>
  </svg>

  <!-- 鼠标高亮 -->
  <svg class="absolute left-[431px] top-[400px]" width="30" height="30" viewBox="0 0 30 30">
    <circle cx="15" cy="15" r="15" fill="#30a53a" fill-opacity=".68"/>
    <path d="M14 8h3.500M18.500 8H21M17.500 8v15M14 23.500h7" stroke="#6b6b5c" fill="none"/>
  </svg>

  <div class="absolute left-[1879px] top-[305px] flex h-[88px] w-6 flex-col items-center rounded-l bg-[#4076dc] pl-px pt-[21px] text-[16px] leading-[23px] text-white"><span>分</span><span>享</span></div>
  <div class="absolute left-[1902px] top-[566px] h-12 w-12 rounded-full border-2 border-[#e6efe8] bg-linear-to-b from-[#54d16a] to-[#27b352] pl-0.5 text-[12px] font-bold leading-[42px] text-white shadow-md ring-1 ring-[#777]">43</div>
  <div class="absolute left-[1159px] top-[-6px] h-2 w-[281px] rounded-b bg-[#9a9a9a] shadow-[0_1px_4px_#888]"></div>
</body>
</html>
